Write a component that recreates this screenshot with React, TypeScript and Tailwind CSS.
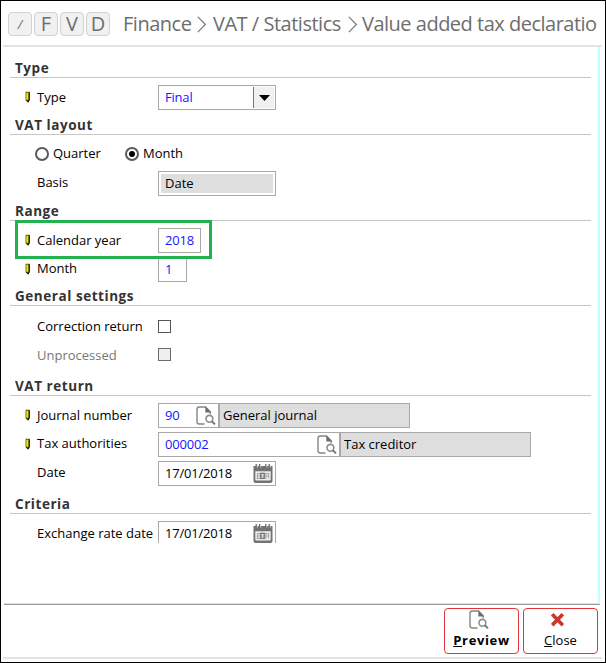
import React from "react";

function DocSearch() {
  return (
    <svg width="20" height="20" viewBox="0 0 20 20" fill="none" className="shrink-0">
      <path d="M8.5 18H3.3Q1 18 1 15.7V3.3Q1 1 3.3 1H9.5L14.2 5.8V8" stroke="#858585" strokeWidth="1.4" />
      <path d="M9.3 0.6L15 6.6H9.3Z" fill="#6c6c6c" />
      <circle cx="13.4" cy="12.8" r="3.4" stroke="#8c8c8c" strokeWidth="1.6" />
      <path d="M15.8 15.3L19 18.4" stroke="#777" strokeWidth="2" />
    </svg>
  );
}

function Calendar() {
  return (
    <svg width="20" height="20" viewBox="0 0 20 20" fill="none" className="shrink-0">
      <path d="M0.5 2H19.5V17Q19.5 19 17.5 19H2.5Q0.5 19 0.5 17Z" fill="#737373" />
      <path d="M2.3 7.3H17.7V15.6Q17.7 16.6 16.7 16.6H3.3Q2.3 16.6 2.3 15.6Z" fill="#ececec" />
      <path d="M4.2 0.5V3.6M7.6 0.5V3.6M13.8 0.5V3.6M17.2 0.5V3.6" stroke="#e8e8e8" strokeWidth="1.1" />
      <path d="M3.2 0V3.4M6.6 0V3.4M12.8 0V3.4M16.2 0V3.4" stroke="#666" strokeWidth="1.2" />
      <path d="M4 9.5H16M3.5 12H16M3.5 14.5H13M4.5 9.5V14.5M7.3 9.5V14.5M13 9.5V14.5M15.7 9.5V14.5" stroke="#a4a4a4" strokeWidth="0.9" />
      <path d="M7.8 9.3H11.2V14.3H7.8Z" stroke="#666" strokeWidth="1.1" />
    </svg>
  );
}

function Pencil() {
  return (
    <svg width="6" height="12" viewBox="0 0 6 12" className="shrink-0">
      <path d="M0.6 0.8H4.6V9L3 11.4L0.6 9.4Z" fill="#4a4a00" />
      <path d="M1.3 1.6H3.5V8.8H1.3Z" fill="#f0e400" />
      <path d="M3.8 1.3H4.7V9L3.2 11.4L2.4 10.4L3.8 9Z" fill="#000" />
    </svg>
  );
}

function Chevron() {
  return (
    <svg width="10" height="17" viewBox="0 0 10 17" fill="none" className="shrink-0">
      <path d="M0.8 0.8L8.4 8.5L0.8 16.2" stroke="#777" strokeWidth="1.2" />
    </svg>
  );
}

function Key({ children, small }: { children: string; small?: boolean }) {
  return (
    <span className={"flex h-6 w-6 items-center justify-center rounded-[4px] border border-[#d2d2d2] bg-[#f1f1f1] leading-[22px] text-[#6e6e6e] " + (small ? "text-[13px] italic" : "text-[20px]")}>
      {children}
    </span>
  );
}

function Heading({ children, className }: { children: string; className: string }) {
  return (
    <h2 className={"flex w-[581px] items-end border-b border-[#c6c6c6] pb-px pl-[5px] text-[13.5px] leading-[16px] font-bold tracking-[0.55px] text-[#333] " + className}>
      {children}
    </h2>
  );
}

function Row({ label, required, muted, raised, className = "mt-1 h-[25px]", children }: { label: string; required?: boolean; muted?: boolean; raised?: boolean; className?: string; children?: React.ReactNode }) {
  return (
    <div className={"flex " + className}>
      <div className="flex h-[24px] w-[27px] shrink-0 items-center pl-[15px]">{required && <Pencil />}</div>
      <div className={"h-[24px] w-[121px] shrink-0 whitespace-nowrap " + (raised ? "leading-[22px] " : "leading-[24px] ") + (muted ? "text-[#777]" : "")}>{label}</div>
      {children}
    </div>
  );
}

const field = "flex items-center border border-[#a8a8a8] bg-white pl-[6px] tracking-[-0.2px] ";

export default function App() {
  return (
    <div className="flex h-[663px] w-[606px] flex-col overflow-hidden border border-black bg-white font-['Open_Sans',sans-serif] text-[13px] text-black">
      <header className="mx-[2px] flex h-[46px] w-[599px] shrink-0 items-center border-b-2 border-[#e3e3e3] pt-[2px] pl-[5px]">
        <div className="flex gap-[2px]">
          <Key small>/</Key>
          <Key>F</Key>
          <Key>V</Key>
          <Key>D</Key>
        </div>
        <div className="ml-[13px] flex w-[476px] items-center text-[20px] leading-[28px] tracking-[-0.48px] whitespace-nowrap text-[#6e6e6e]">
          <span className="w-[74px] shrink-0">Finance</span>
          <Chevron />
          <span className="ml-[6px] w-[135px] shrink-0">VAT / Statistics</span>
          <Chevron />
          <span className="ml-[4px] shrink-0 tracking-[-0.5px]">Value added tax declaratio</span>
        </div>
      </header>

      <div className="mr-[5px] ml-[3px] flex h-[558px] shrink-0 flex-col border-b border-[#9c9c9c]">
        <main className="flex h-[557px] border-r-2 border-b border-r-[#c4ffff] border-b-[#dedede] bg-white">
          <div className="pl-[6px]">
            <Heading className="h-[31px]">Type</Heading>
            <Row label="Type" required className="mt-[7px] h-[25px]">
              <div className={field + "w-[118px] text-[#1616ff]"}>
                <span className="flex-1">Final</span>
                <span className="mr-px flex h-[21px] w-[21px] items-center justify-center border-l border-[#777] bg-[#f0f0f0]">
                  <svg width="11" height="6" viewBox="0 0 11 6"><path d="M0 0H11L5.5 6Z" fill="#000" /></svg>
                </span>
              </div>
            </Row>

            <Heading className="h-[25px]">VAT layout</Heading>
            <div className="mt-[6px] flex h-[25px] items-center pl-[25px]">
              <span className="h-[14px] w-[14px] rounded-full border-2 border-[#5a5a5a]" />
              <span className="ml-[4px] w-[72px]">Quarter</span>
              <span className="flex h-[14px] w-[14px] items-center justify-center rounded-full border-2 border-[#5a5a5a]">
                <span className="h-[6px] w-[6px] rounded-full bg-black" />
              </span>
              <span className="ml-[4px]">Month</span>
            </div>
            <Row label="Basis" raised className="mt-[5px] h-[25px]">
              <div className="w-[118px] border border-[#a8a8a8] p-[2px]">
                <div className="flex h-full items-center bg-[#dedede] pl-[4px]">Date</div>
              </div>
            </Row>

            <Heading className="h-[25px]">Range</Heading>
            <div className="relative pt-[7px]">
              <div className="absolute -top-px left-[5px] z-10 h-[39px] w-[197px] border-3 border-[#22b14c]" />
              <Row label="Calendar year" required className="h-[25px]">
                <div className={field + "w-[43px] text-[#1616ff]"}>2018</div>
              </Row>
            </div>
            <Row label="Month" required raised>
              <div className={field + "w-[29px] pt-px text-[#1616ff]"}>1</div>
            </Row>

            <Heading className="h-[24px]">General settings</Heading>
            <Row label="Correction return" className="mt-[8px] h-[25px]">
              <span className="mt-[6px] h-[13px] w-[13px] border border-[#555]" />
            </Row>
            <Row label="Unprocessed" muted>
              <span className="mt-[5px] h-[13px] w-[13px] border border-[#6c6c6c] bg-[#efefef]" />
            </Row>

            <Heading className="h-[28px]">VAT return</Heading>
            <Row label="Journal number" required className="mt-[7px] h-[25px]">
              <div className={field + "w-[61px]"}>
                <span className="w-[31px] pt-px text-[#1616ff]">90</span>
                <DocSearch />
              </div>
              <div className="flex w-[191px] items-center border border-[#a8a8a8] bg-[#dedede] pl-[3px]">General journal</div>
            </Row>
            <Row label="Tax authorities" required raised>
              <div className={field + "w-[182px]"}>
                <span className="w-[152px] pt-px text-[#1616ff]">000002</span>
                <DocSearch />
              </div>
              <div className="flex w-[191px] items-center border border-[#a8a8a8] bg-[#dedede] pl-[3px]">Tax creditor</div>
            </Row>
            <Row label="Date" raised>
              <div className={field + "w-[118px]"}>
                <span className="w-[88px]">17/01/2018</span>
                <Calendar />
              </div>
            </Row>

            <Heading className="h-[28px]">Criteria</Heading>
            <Row label="Exchange rate date" className="mt-[7px] h-[22px] overflow-hidden">
              <div className={field + "h-[25px] w-[118px]"}>
                <span className="w-[88px] pt-px">17/01/2018</span>
                <Calendar />
              </div>
            </Row>
          </div>
        </main>
      </div>

      <footer className="mx-[2px] flex h-[54px] w-[599px] shrink-0 justify-end gap-[4px] border-b-2 border-[#e3e3e3] pt-[3px] pr-[4px]">
        <button className="flex h-[46px] w-[75px] flex-col items-center rounded-[4px] border border-[#e3343c] pt-px pr-[6px] font-bold">
          <span className="ml-[1px]"><DocSearch /></span>
          <span className="-mr-[6px] leading-[20px] tracking-[0.65px]"><span className="underline">P</span>review</span>
        </button>
        <button className="flex h-[46px] w-[75px] flex-col items-center rounded-[4px] border border-[#e3343c] pt-px">
          <svg width="14" height="20" viewBox="0 0 14 20" className="mr-[6px]"><path d="M1.2 4.2L11.8 15.2M11.8 4.2L1.2 15.2" stroke="#c8382e" strokeWidth="3.6" /></svg>
          <span className="leading-[20px]"><span className="underline">C</span>lose</span>
        </button>
      </footer>
    </div>
  );
}
